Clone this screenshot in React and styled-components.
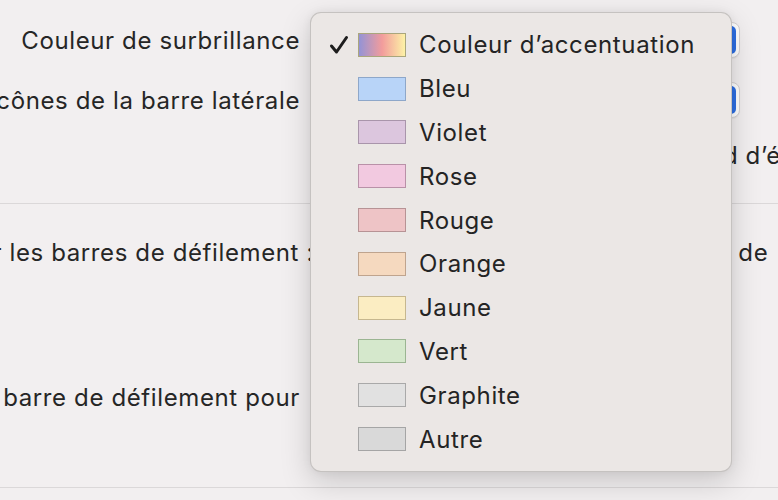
import styled, { createGlobalStyle } from 'styled-components';

const GlobalStyle = createGlobalStyle`
  html, body {
    margin: 0;
    padding: 0;
    background: #f2eff0;
  }
  body {
    font-family: Inter, "Noto Sans", "Liberation Sans", sans-serif;
    color: #262626;
  }
`;

const colors = [
  { name: 'Couleur d\u2019accentuation', fill: 'linear-gradient(90deg, #9393d6 0%, #f29c9c 50%, #fdf2a6 100%)', border: '#aaa67c', checked: true },
  { name: 'Bleu', fill: '#b8d4f8', border: '#8ea7c9' },
  { name: 'Violet', fill: '#dcc6de', border: '#a995ab' },
  { name: 'Rose', fill: '#f2c9e0', border: '#b991a8' },
  { name: 'Rouge', fill: '#eec4c6', border: '#b79395' },
  { name: 'Orange', fill: '#f5d9bf', border: '#bfa48e' },
  { name: 'Jaune', fill: '#fbedc2', border: '#c6b78f' },
  { name: 'Vert', fill: '#d5e8cc', border: '#9bb592' },
  { name: 'Graphite', fill: '#e1e1e1', border: '#a9a9a9' },
  { name: 'Autre', fill: '#d9d9d9', border: '#a5a5a5' },
];

const App = () => {
  return (
    <>
      <GlobalStyle />
      <Page>
        <Section $pt={20} $pb={28}>
          <Row $h={40}>
            <Label>Couleur de surbrillance</Label>
            <Control>
              <Popup>
                <Stepper />
              </Popup>
            </Control>
          </Row>
          <Row $h={40} $mt={20}>
            <Label>Taille des icônes de la barre latérale</Label>
            <Control>
              <Popup>
                <Stepper />
              </Popup>
            </Control>
          </Row>
          <Row $h={40} $mt={15}>
            <span />
            <Control $indent={82}>
              <Check />
              <OptionText>Autoriser la teinte du fond d’écran</OptionText>
            </Control>
          </Row>
        </Section>

        <Section $pt={26} $pb={24}>
          <Row $h={44}>
            <Label $shift={14}>Afficher les barres de défilement :</Label>
            <Control $indent={31}>
              <Radio />
              <OptionText>Automatiquement en fonction de{'\u2002'}la souris</OptionText>
            </Control>
          </Row>
          <Row $h={44}>
            <span />
            <Control $indent={31}>
              <Radio />
            </Control>
          </Row>
          <Row $h={44}>
            <span />
            <Control $indent={31}>
              <Radio />
            </Control>
          </Row>
          <Row $h={44} $mt={13}>
            <Label>Cliquer dans la barre de défilement pour</Label>
            <Control $indent={31}>
              <Radio />
            </Control>
          </Row>
          <Row $h={44}>
            <span />
            <Control $indent={31}>
              <Radio />
            </Control>
          </Row>
        </Section>

        <Menu>
          {colors.map((c) => (
            <MenuItem key={c.name}>
              <CheckSlot>
                {c.checked && (
                  <svg width="20" height="20" viewBox="0 0 20 20">
                    <path
                      d="M2.5 11 L7.5 17 L17.5 2.5"
                      fill="none"
                      stroke="#1d1d1d"
                      strokeWidth="3"
                      strokeLinecap="round"
                      strokeLinejoin="round"
                    />
                  </svg>
                )}
              </CheckSlot>
              <Swatch $fill={c.fill} $border={c.border} />
              <ItemText>{c.name}</ItemText>
            </MenuItem>
          ))}
        </Menu>
      </Page>
    </>
  );
};

const Page = styled.div`
  position: relative;
  width: 778px;
  height: 500px;
  overflow: hidden;
  background: #f2eff0;
`;

const Section = styled.div`
  display: flex;
  flex-direction: column;
  padding-top: ${(props) => props.$pt}px;
  padding-bottom: ${(props) => props.$pb}px;
  border-bottom: 1px solid #dbd8d9;
`;

const Row = styled.div`
  display: grid;
  grid-template-columns: 300px 1fr;
  column-gap: 18px;
  align-items: center;
  height: ${(props) => props.$h}px;
  margin-top: ${(props) => props.$mt || 0}px;
  padding-right: 38px;
`;

const Label = styled.div`
  display: flex;
  justify-content: flex-end;
  white-space: nowrap;
  font-size: 24px;
  letter-spacing: 0.62px;
  margin-right: ${(props) => -(props.$shift || 0)}px;
`;

const Control = styled.div`
  display: flex;
  align-items: center;
  gap: 10px;
  white-space: nowrap;
  min-width: 0;
  padding-left: ${(props) => props.$indent || 0}px;
`;

const Popup = styled.div`
  margin-left: auto;
  display: flex;
  align-items: center;
  justify-content: flex-end;
  width: 260px;
  height: 36px;
  box-sizing: border-box;
  padding: 3px;
  background: #ffffff;
  border: 1px solid #d6d3d4;
  border-radius: 8px;
  box-shadow: 0 1px 1px rgba(0, 0, 0, 0.06);
`;

const Stepper = styled.span`
  width: 20px;
  height: 28px;
  border-radius: 5px;
  background: #2d6fe4;
`;

const Check = styled.span`
  width: 18px;
  height: 18px;
  border-radius: 4px;
  background: #2d6fe4;
  flex: none;
`;

const Radio = styled.span`
  width: 18px;
  height: 18px;
  border-radius: 50%;
  background: #ffffff;
  border: 1px solid #c9c6c7;
  flex: none;
`;

const OptionText = styled.span`
  font-size: 24px;
  letter-spacing: 0.62px;
`;

const Menu = styled.div`
  position: absolute;
  left: 310px;
  top: 12px;
  width: 422px;
  height: 460px;
  box-sizing: border-box;
  padding: 10px 0;
  background: #ebe7e5;
  border: 1px solid rgba(0, 0, 0, 0.16);
  border-radius: 11px;
  box-shadow: 0 10px 30px rgba(0, 0, 0, 0.17), 0 0 10px rgba(0, 0, 0, 0.06);
  display: flex;
  flex-direction: column;
`;

const MenuItem = styled.div`
  display: flex;
  align-items: center;
  height: 44px;
  padding-left: 18px;
`;

const CheckSlot = styled.span`
  display: flex;
  align-items: center;
  width: 29px;
  height: 20px;
`;

const Swatch = styled.span`
  width: 48px;
  height: 24px;
  box-sizing: border-box;
  background: ${(props) => props.$fill};
  border: 1px solid ${(props) => props.$border};
  flex: none;
`;

const ItemText = styled.span`
  margin-left: 13px;
  font-size: 24px;
  letter-spacing: 0.62px;
  color: #242424;
`;

export default App;
